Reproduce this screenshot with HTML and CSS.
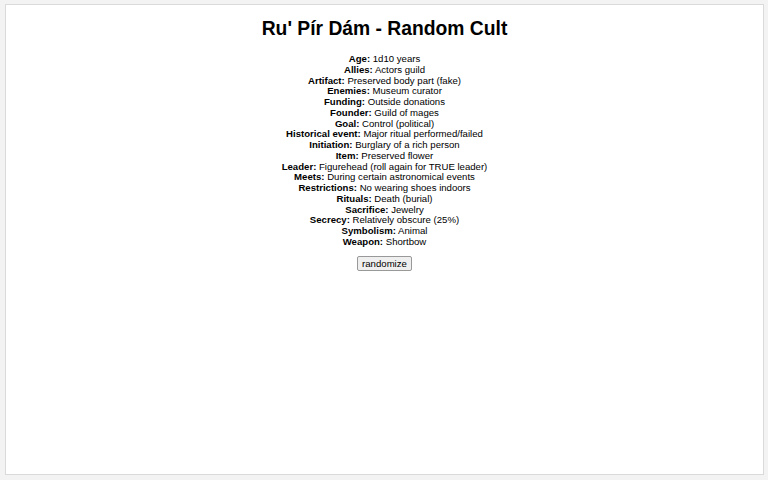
FILE: index.html
```html
<!DOCTYPE html>
<html>
<head>
<meta charset="utf-8">
<title>Ru' Pír Dám - Random Cult</title>
<link rel="stylesheet" href="styles.css">
</head>
<body>
<div class="panel">
  <h1 class="title">Ru' Pír Dám - Random Cult</h1>
  <div class="traits">
    <div><b>Age:</b> 1d10 years</div>
    <div><b>Allies:</b> Actors guild</div>
    <div><b>Artifact:</b> Preserved body part (fake)</div>
    <div><b>Enemies:</b> Museum curator</div>
    <div><b>Funding:</b> Outside donations</div>
    <div><b>Founder:</b> Guild of mages</div>
    <div><b>Goal:</b> Control (political)</div>
    <div><b>Historical event:</b> Major ritual performed/failed</div>
    <div><b>Initiation:</b> Burglary of a rich person</div>
    <div><b>Item:</b> Preserved flower</div>
    <div><b>Leader:</b> Figurehead (roll again for TRUE leader)</div>
    <div><b>Meets:</b> During certain astronomical events</div>
    <div><b>Restrictions:</b> No wearing shoes indoors</div>
    <div><b>Rituals:</b> Death (burial)</div>
    <div><b>Sacrifice:</b> Jewelry</div>
    <div><b>Secrecy:</b> Relatively obscure (25%)</div>
    <div><b>Symbolism:</b> Animal</div>
    <div><b>Weapon:</b> Shortbow</div>
  </div>
  <div class="actions"><button class="btn" type="button">randomize</button></div>
</div>
</body>
</html>
```
FILE: styles.css
```css
html, body {
  margin: 0;
  height: 100%;
}
body {
  background: #f3f3f3;
  padding: 4px 4px 5px 5px;
  box-sizing: border-box;
  font-family: "Liberation Sans", Arial, sans-serif;
  color: #000;
}
.panel {
  background: #fff;
  border: 1px solid #dadada;
  height: 100%;
  box-sizing: border-box;
  text-align: center;
  padding-top: 12px;
}
.title {
  font-size: 19.3px;
  font-weight: bold;
  margin: 0 0 13px;
  line-height: 24px;
}
.traits {
  font-size: 9.6px;
  line-height: 10.76px;
}
.actions {
  margin-top: 5px;
}
.btn {
  font-family: "Liberation Sans", Arial, sans-serif;
  font-size: 9.6px;
  padding: 1px 4px;
  background: #efefef;
  border: 1px solid #999;
  border-radius: 2px;
  color: #000;
}
```
